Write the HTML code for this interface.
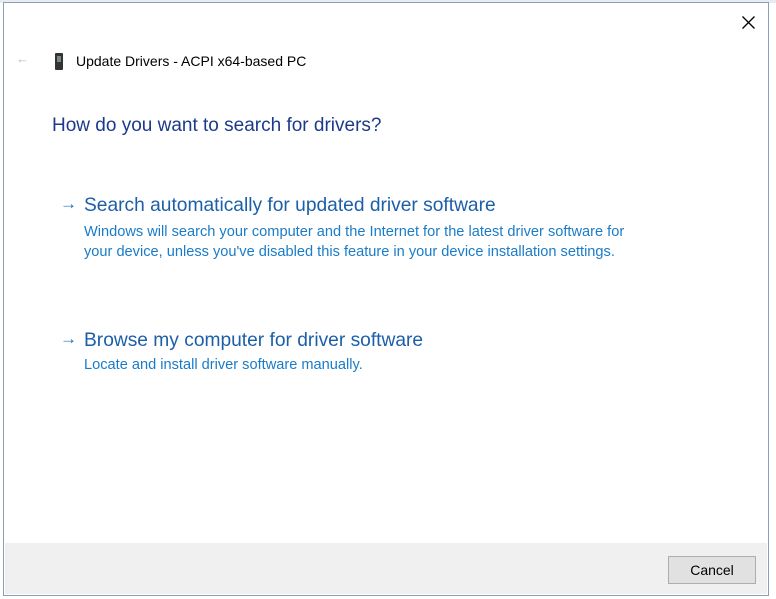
<!DOCTYPE html>
<html><head><meta charset="utf-8"><style>
body{margin:0;width:776px;height:599px;background:#fff;position:relative;overflow:hidden;font-family:"Liberation Sans",sans-serif}
.win{position:absolute;left:3px;top:2px;width:766px;height:594px;border:1px solid #8aa0b8;background:#fff;box-sizing:border-box}
.t{position:absolute;white-space:nowrap}
.foot{position:absolute;left:1px;right:1px;bottom:1px;height:51px;background:#f0f0f0}
.btn{position:absolute;left:664px;top:553px;width:88px;height:28px;border:1px solid #adadad;background:#e1e1e1;box-sizing:border-box;font-size:14px;color:#000;text-align:center;line-height:26px}
</style></head><body>
<div style="position:absolute;left:0;top:0;width:776px;height:3px;background:#e8ecf0"></div>
<div class="win">
<svg style="position:absolute;left:738px;top:13px" width="13" height="13" viewBox="0 0 13 13"><path d="M0.5 0.5L12.5 12.5M12.5 0.5L0.5 12.5" stroke="#000" stroke-width="1.3"/></svg>
<div class="t" style="left:12px;top:48px;font-size:13px;color:#bbb">←</div>
<div style="position:absolute;left:51px;top:50px;width:8px;height:17px;background:#333;border-radius:1px"></div>
<div style="position:absolute;left:53px;top:53px;width:4px;height:6px;background:#7a8a80"></div>
<div class="t" style="left:72px;top:50px;font-size:14px;color:#000">Update Drivers - ACPI x64-based PC</div>
<div class="t" style="left:48px;top:112px;font-size:19px;color:#1c3a8c">How do you want to search for drivers?</div>
<div class="t" style="left:56px;top:191px;font-size:17px;color:#1c6fb0">→</div>
<div class="t" style="left:80px;top:192px;font-size:19.2px;color:#1c5fa8">Search automatically for updated driver software</div>
<div class="t" style="left:80px;top:219px;font-size:14.6px;line-height:20px;color:#1a7cc8">Windows will search your computer and the Internet for the latest driver software for<br>your device, unless you've disabled this feature in your device installation settings.</div>
<div class="t" style="left:56px;top:326px;font-size:17px;color:#1c6fb0">→</div>
<div class="t" style="left:80px;top:327px;font-size:19.2px;color:#1c5fa8">Browse my computer for driver software</div>
<div class="t" style="left:80px;top:354px;font-size:14.6px;color:#1a7cc8">Locate and install driver software manually.</div>
<div class="foot"></div>
<div class="btn">Cancel</div>
</div>
</body></html>
